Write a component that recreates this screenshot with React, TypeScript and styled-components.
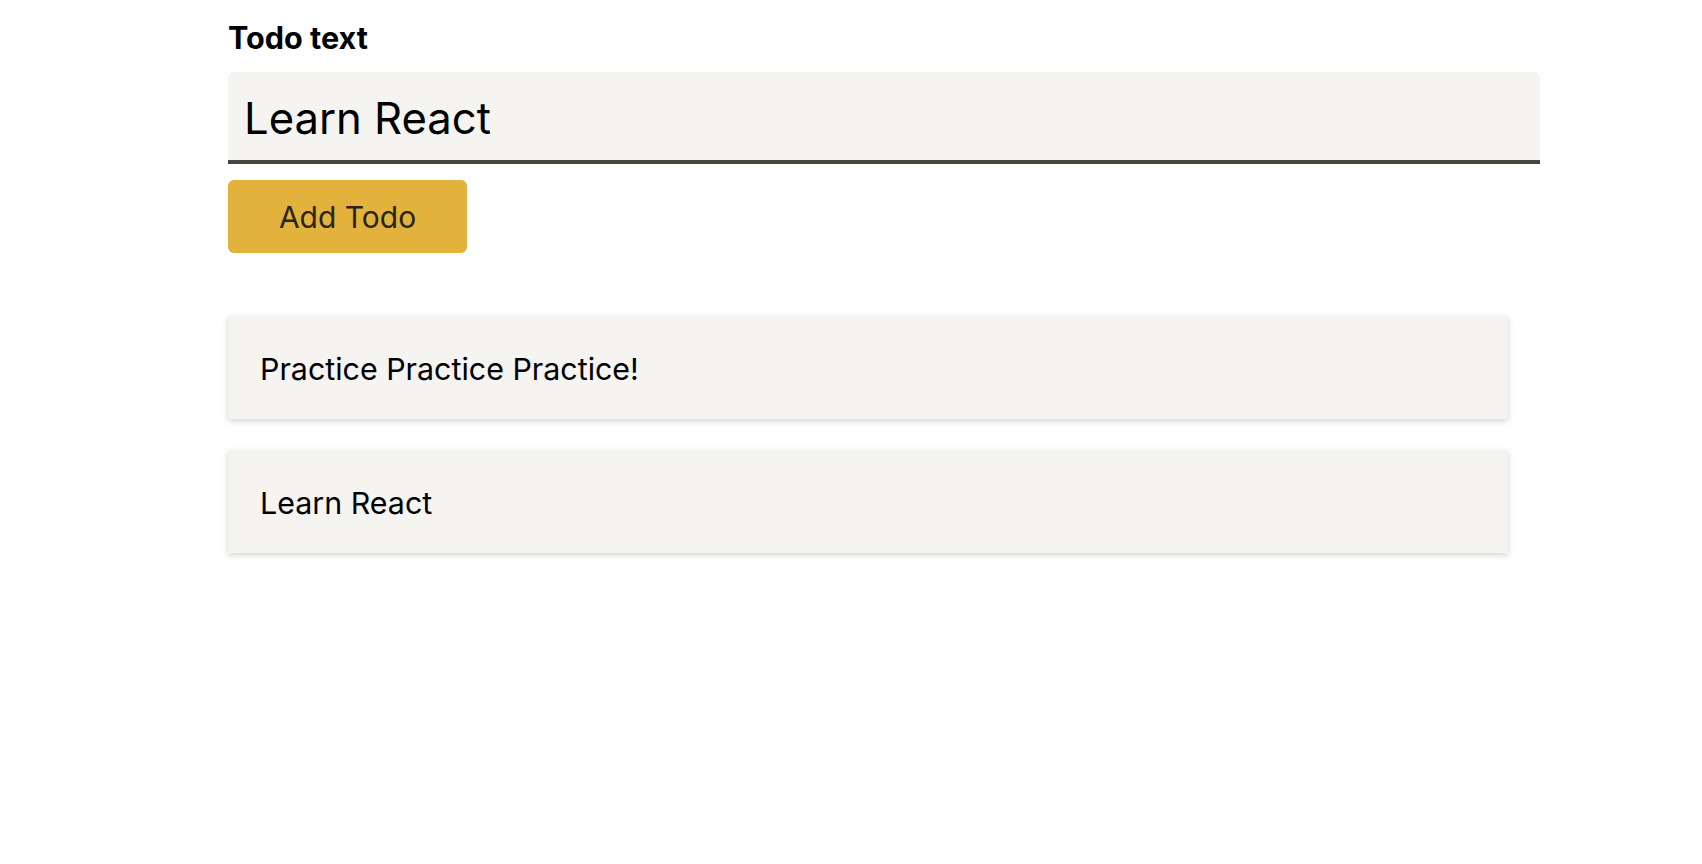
import React, { useState } from "react";
import styled, { createGlobalStyle } from "styled-components";

const GlobalStyle = createGlobalStyle`
  body {
    margin: 0;
    background: #ffffff;
    font-family: Inter, "Noto Sans", "Liberation Sans", sans-serif;
    color: #000000;
  }
`;

const Page = styled.main`
  width: 1312px;
  margin-left: 228px;
  padding: 19px 0 120px;
`;

const Form = styled.form`
  display: flex;
  flex-direction: column;
  align-items: flex-start;
`;

const Label = styled.label`
  font-size: 30.6px;
  font-weight: 700;
  margin-bottom: 16px;
`;

const TextInput = styled.input`
  box-sizing: border-box;
  width: 100%;
  height: 92px;
  padding: 5px 16px 0;
  border: none;
  border-bottom: 4px solid #474741;
  border-radius: 6px 6px 0 0;
  background: #f5f4f0;
  font-family: inherit;
  font-size: 43.6px;
  color: #000000;
  outline: none;
`;

const AddButton = styled.button`
  box-sizing: border-box;
  width: 239px;
  height: 73px;
  margin-top: 16px;
  padding-top: 2px;
  border: none;
  border-radius: 6px;
  background: #e3b23c;
  color: #2a2416;
  font-family: inherit;
  font-size: 30px;
  cursor: pointer;
`;

const TodoList = styled.ul`
  list-style: none;
  margin: 63px 0 0;
  padding: 0;
  display: flex;
  flex-direction: column;
  gap: 31px;
`;

const TodoItem = styled.li`
  box-sizing: border-box;
  width: 1280px;
  height: 103px;
  padding: 2px 32px 0;
  display: flex;
  align-items: center;
  background: #f5f4f0;
  box-shadow: 0 2px 6px rgba(0, 0, 0, 0.18);
  font-size: 30.4px;
`;

const App = () => {
  const [text, setText] = useState<string>("Learn React");
  const [todos, setTodos] = useState<string[]>([
    "Practice Practice Practice!",
    "Learn React"
  ]);

  const handleSubmit = (e: React.FormEvent) => {
    e.preventDefault();
    if (!text.trim()) return;
    setTodos([text, ...todos]);
  };

  return (
    <>
      <GlobalStyle />
      <Page>
        <Form onSubmit={handleSubmit}>
          <Label htmlFor="todo-text">Todo text</Label>
          <TextInput
            id="todo-text"
            value={text}
            onChange={(e) => setText(e.target.value)}
          />
          <AddButton type="submit">Add Todo</AddButton>
        </Form>
        <TodoList>
          {todos.map((todo, i) => (
            <TodoItem key={`${todo}-${i}`}>{todo}</TodoItem>
          ))}
        </TodoList>
      </Page>
    </>
  );
};

export default App;
